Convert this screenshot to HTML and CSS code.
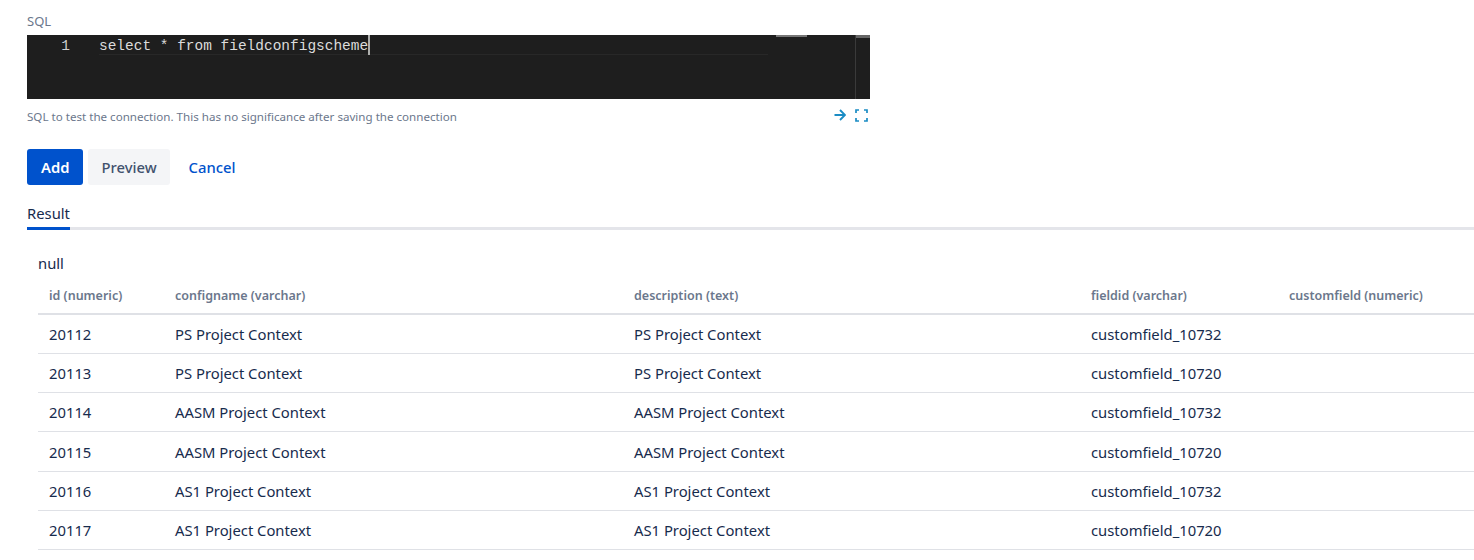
FILE: index.html
```html
<!DOCTYPE html>
<html lang="en">
<head>
<meta charset="utf-8">
<title>SQL</title>
<link rel="stylesheet" href="styles.css">
</head>
<body>
<div class="page">
  <div class="field-label">SQL</div>
  <div class="editor-wrap">
    <div class="editor">
      <div class="gutter">1</div>
      <div class="code-area"><div class="code-line"><span class="code-text">select * from fieldconfigscheme</span><span class="cursor"></span></div></div>
      <div class="minimap"><div class="minimap-text"></div></div>
      <div class="scrollbar"><div class="scroll-top"></div></div>
    </div>
    <div class="help-row">
      <span class="help">SQL to test the connection. This has no significance after saving the connection</span>
      <span class="editor-icons">
        <svg class="icon" width="12" height="12" viewBox="0 0 12 12"><path d="M0.5 6H11M6 1L11 6L6 11" fill="none" stroke="#1a8cc4" stroke-width="1.9"/></svg>
        <svg class="icon" width="13" height="13" viewBox="0 0 13 13"><path d="M1 4V1H4M9 1H12V4M12 9V12H9M4 12H1V9" fill="none" stroke="#1a8cc4" stroke-width="1.7"/></svg>
      </span>
    </div>
  </div>
  <div class="actions">
    <button class="btn btn-primary">Add</button>
    <button class="btn btn-default">Preview</button>
    <button class="btn btn-link">Cancel</button>
  </div>
  <div class="tabs"><div class="tab">Result</div></div>
  <div class="panel">
    <div class="null-text">null</div>
    <table class="result">
      <colgroup><col class="c1"><col class="c2"><col class="c3"><col class="c4"><col class="c5"></colgroup>
      <thead>
        <tr><th>id (numeric)</th><th>configname (varchar)</th><th>description (text)</th><th>fieldid (varchar)</th><th>customfield (numeric)</th></tr>
      </thead>
      <tbody>
        <tr><td>20112</td><td>PS Project Context</td><td>PS Project Context</td><td>customfield_10732</td><td></td></tr>
        <tr><td>20113</td><td>PS Project Context</td><td>PS Project Context</td><td>customfield_10720</td><td></td></tr>
        <tr><td>20114</td><td>AASM Project Context</td><td>AASM Project Context</td><td>customfield_10732</td><td></td></tr>
        <tr><td>20115</td><td>AASM Project Context</td><td>AASM Project Context</td><td>customfield_10720</td><td></td></tr>
        <tr><td>20116</td><td>AS1 Project Context</td><td>AS1 Project Context</td><td>customfield_10732</td><td></td></tr>
        <tr><td>20117</td><td>AS1 Project Context</td><td>AS1 Project Context</td><td>customfield_10720</td><td></td></tr>
      </tbody>
    </table>
  </div>
</div>
</body>
</html>
```
FILE: styles.css
```css
* { box-sizing: border-box; }
html, body { margin: 0; padding: 0; background: #fff; }
body { font-family: "Noto Sans", "Open Sans", sans-serif; color: #172b4d; height: 560px; overflow: hidden; }
.page { padding: 12px 0 0 27px; }
.field-label { font-size: 13px; line-height: 18px; height: 23px; color: #6b778c; }
.editor-wrap { width: 843px; }
.editor { display: flex; height: 64px; background: #1e1e1e; }
.gutter { width: 72px; padding: 2px 29px 0 0; text-align: right; font: 14.47px/19px "Liberation Mono", monospace; color: #d0d0d0; }
.code-area { width: 669px; }
.code-line { display: flex; height: 20px; border-bottom: 1px solid #282828; }
.code-text { padding-top: 2px; font: 14.47px/19px "Liberation Mono", monospace; color: #dcdcdc; }
.cursor { width: 2px; height: 20px; background: #aeafad; }
.minimap { flex: 1; }
.minimap-text { width: 31px; height: 2px; margin-left: 8px; background: #777; }
.scrollbar { width: 15px; border-left: 1px solid #3a3a3a; }
.scroll-top { height: 3px; background: #666; }
.help-row { display: flex; justify-content: space-between; align-items: center; height: 36px; padding-bottom: 1px; }
.help { font-size: 11.6px; color: #6b778c; }
.editor-icons { display: flex; align-items: center; gap: 9px; padding-right: 2px; margin-bottom: 3px; }
.icon { display: block; }
.actions { display: flex; gap: 5px; margin-top: 14px; }
.btn { height: 36px; border: 0; border-radius: 3px; padding: 0 13px; font-family: inherit; font-size: 14.8px; font-weight: 500; }
.btn-primary { background: #0052cc; color: #fff; font-weight: 600; padding: 0 14px; }
.btn-default { background: #f4f5f7; color: #42526e; }
.btn-link { background: none; color: #0052cc; margin-left: 1px; padding: 0 13px; }
.tabs { margin-top: 13px; border-bottom: 3px solid #e4e5ea; height: 32px; }
.tab { display: inline-block; height: 32px; padding-top: 6px; font-size: 14.8px; line-height: 18px; border-bottom: 3px solid #0052cc; }
.panel { padding: 23px 0 0 11px; }
.null-text { font-size: 14.8px; line-height: 20px; }
.result { border-collapse: collapse; table-layout: fixed; width: 1436px; margin-top: 2px; }
.c1 { width: 126px; } .c2 { width: 459px; } .c3 { width: 457px; } .c4 { width: 198px; } .c5 { width: 196px; }
th { height: 39px; padding: 3px 11px 0; font-size: 12.5px; font-weight: 600; color: #6b778c; text-align: left; border-bottom: 2px solid #dfe1e6; }
td { height: 39.33px; padding: 0 11px 0; font-size: 14.8px; border-bottom: 1px solid #dfe1e6; }
```
